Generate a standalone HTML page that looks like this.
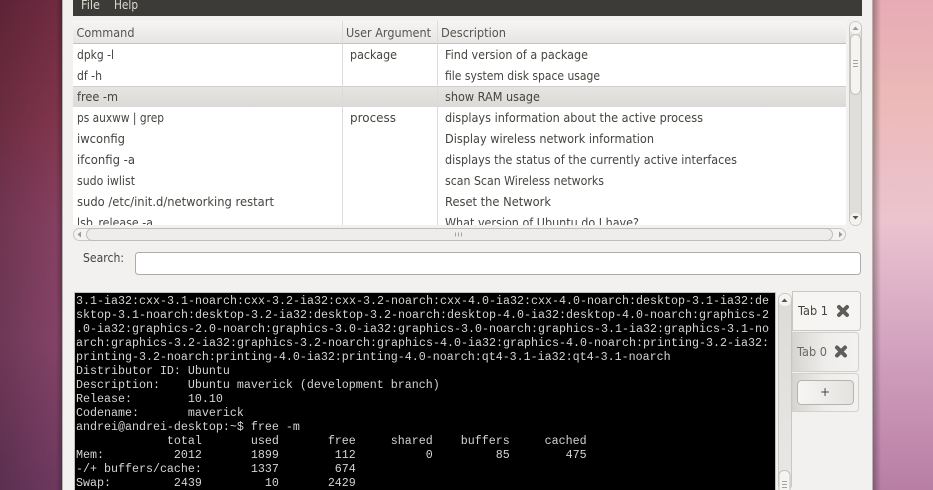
<!DOCTYPE html>
<html><head><meta charset="utf-8"><style>
html,body{margin:0;padding:0;width:933px;height:490px;overflow:hidden;background:#f2f1ef}
svg{position:absolute;left:0;top:0}
.t{font-family:"DejaVu Sans","Liberation Sans",sans-serif;font-size:12px;fill:#45443f}
.h{font-family:"DejaVu Sans","Liberation Sans",sans-serif;font-size:12px;fill:#55544f}
.m{font-family:"Liberation Mono",monospace;font-size:11.67px;fill:#d4d4d4}
</style></head><body>
<svg width="933" height="490" viewBox="0 0 933 490" xmlns="http://www.w3.org/2000/svg">
<defs>
<linearGradient id="bl" x1="0" y1="0" x2="0" y2="1"><stop offset="0" stop-color="#6e2a40"/><stop offset=".25" stop-color="#80354c"/><stop offset=".45" stop-color="#843f60"/><stop offset=".7" stop-color="#824266"/><stop offset="1" stop-color="#6c385e"/></linearGradient>
<linearGradient id="br" x1="0" y1="0" x2="0" y2="1"><stop offset="0" stop-color="#e7abb5"/><stop offset=".2" stop-color="#ecb9b8"/><stop offset=".45" stop-color="#ebc4cf"/><stop offset=".7" stop-color="#d3a3c0"/><stop offset="1" stop-color="#b87ea4"/></linearGradient>
<linearGradient id="hd" x1="0" y1="0" x2="0" y2="1"><stop offset="0" stop-color="#f6f5f4"/><stop offset="1" stop-color="#e6e5e3"/></linearGradient>
<linearGradient id="sel" x1="0" y1="0" x2="0" y2="1"><stop offset="0" stop-color="#e6e5e3"/><stop offset="1" stop-color="#dbdad7"/></linearGradient>
<linearGradient id="th" x1="0" y1="0" x2="1" y2="0"><stop offset="0" stop-color="#f7f6f5"/><stop offset="1" stop-color="#e3e2df"/></linearGradient>
<linearGradient id="tv" x1="0" y1="0" x2="0" y2="1"><stop offset="0" stop-color="#dcdbd8"/><stop offset="1" stop-color="#e9e8e6"/></linearGradient>
<linearGradient id="tab" x1="0" y1="0" x2="1" y2="0"><stop offset="0" stop-color="#d6d5d1"/><stop offset=".5" stop-color="#eeedeb"/><stop offset="1" stop-color="#f3f2f0"/></linearGradient>
<linearGradient id="dk" x1="0" y1="0" x2="1" y2="0"><stop offset="0" stop-color="#000" stop-opacity=".16"/><stop offset="1" stop-color="#000" stop-opacity="0"/></linearGradient>
<linearGradient id="shl" x1="0" y1="0" x2="1" y2="0"><stop offset="0" stop-color="#000" stop-opacity="0"/><stop offset="1" stop-color="#000" stop-opacity=".22"/></linearGradient>
<linearGradient id="shr" x1="0" y1="0" x2="1" y2="0"><stop offset="0" stop-color="#000" stop-opacity=".3"/><stop offset="1" stop-color="#000" stop-opacity="0"/></linearGradient>
</defs>
<!-- desktop -->
<rect x="0" y="0" width="62" height="490" fill="url(#bl)"/>
<rect x="0" y="0" width="55" height="490" fill="url(#dk)"/>
<rect x="873" y="0" width="60" height="490" fill="url(#br)"/>
<rect x="56" y="0" width="6" height="490" fill="url(#shl)"/>
<rect x="873" y="0" width="8" height="490" fill="url(#shr)"/>
<!-- window -->
<rect x="62" y="0" width="811" height="490" fill="#f2f1ef"/>
<rect x="62" y="0" width="1" height="490" fill="#b5b3ad"/>
<rect x="872" y="0" width="1" height="490" fill="#b5b3ad"/>
<!-- menu -->
<rect x="73" y="0" width="789" height="16" fill="#3c3b37"/>
<text x="81" y="9" class="t" style="fill:#dfdbd2" textLength="19" lengthAdjust="spacingAndGlyphs">File</text>
<text x="114" y="9" class="t" style="fill:#dfdbd2" textLength="24" lengthAdjust="spacingAndGlyphs">Help</text>
<!-- list -->
<rect x="73" y="21" width="773" height="204" fill="#fff"/>
<rect x="73" y="21" width="773" height="22" fill="url(#hd)"/>
<rect x="73" y="43" width="773" height="1" fill="#c4c2bd"/>
<rect x="73" y="86" width="773" height="21" fill="url(#sel)"/>
<rect x="73" y="86" width="773" height="1" fill="#d0cfcb"/>
<rect x="342" y="21" width="1" height="204" fill="#dcdbd8"/>
<rect x="437" y="21" width="1" height="204" fill="#dcdbd8"/>
<text x="76.500" y="37" class="h" textLength="58" lengthAdjust="spacingAndGlyphs">Command</text>
<text x="346" y="37" class="h" textLength="85" lengthAdjust="spacingAndGlyphs">User Argument</text>
<text x="441" y="37" class="h" textLength="65" lengthAdjust="spacingAndGlyphs">Description</text>
<text x="77" y="59" class="t" textLength="37" lengthAdjust="spacingAndGlyphs">dpkg -l</text>
<text x="77" y="80" class="t" textLength="25" lengthAdjust="spacingAndGlyphs">df -h</text>
<text x="77" y="101" class="t" textLength="41" lengthAdjust="spacingAndGlyphs">free -m</text>
<text x="77" y="122" class="t" textLength="87" lengthAdjust="spacingAndGlyphs">ps auxww | grep</text>
<text x="77" y="143" class="t" textLength="48" lengthAdjust="spacingAndGlyphs">iwconfig</text>
<text x="77" y="164" class="t" textLength="58" lengthAdjust="spacingAndGlyphs">ifconfig -a</text>
<text x="77" y="185" class="t" textLength="58" lengthAdjust="spacingAndGlyphs">sudo iwlist</text>
<text x="77" y="206" class="t" textLength="197" lengthAdjust="spacingAndGlyphs">sudo /etc/init.d/networking restart</text>
<text x="350" y="59" class="t" textLength="47" lengthAdjust="spacingAndGlyphs">package</text>
<text x="350" y="122" class="t" textLength="46" lengthAdjust="spacingAndGlyphs">process</text>
<text x="445" y="59" class="t" textLength="143" lengthAdjust="spacingAndGlyphs">Find version of a package</text>
<text x="445" y="80" class="t" textLength="155" lengthAdjust="spacingAndGlyphs">file system disk space usage</text>
<text x="445" y="101" class="t" textLength="95" lengthAdjust="spacingAndGlyphs">show RAM usage</text>
<text x="445" y="122" class="t" textLength="258" lengthAdjust="spacingAndGlyphs">displays information about the active process</text>
<text x="445" y="143" class="t" textLength="209" lengthAdjust="spacingAndGlyphs">Display wireless network information</text>
<text x="445" y="164" class="t" textLength="292" lengthAdjust="spacingAndGlyphs">displays the status of the currently active interfaces</text>
<text x="445" y="185" class="t" textLength="159" lengthAdjust="spacingAndGlyphs">scan Scan Wireless networks</text>
<text x="445" y="206" class="t" textLength="106" lengthAdjust="spacingAndGlyphs">Reset the Network</text>
<svg x="73" y="215" width="773" height="10" viewBox="73 215 773 10">
<text x="77" y="227" class="t" textLength="76" lengthAdjust="spacingAndGlyphs">lsb_release -a</text>
<text x="445" y="227" class="t" textLength="194" lengthAdjust="spacingAndGlyphs">What version of Ubuntu do I have?</text>
</svg>
<!-- vertical list scrollbar -->
<rect x="849.500" y="21.500" width="12" height="204" rx="6" fill="#dfdedb" stroke="#c9c7c2"/>
<rect x="850" y="22" width="11" height="12" rx="5" fill="#f4f3f2"/>
<path d="M852.500 30h6l-3-3.500z" fill="#9a9892"/>
<rect x="850" y="213" width="11" height="12" rx="5" fill="#f4f3f2"/>
<path d="M852.500 216h6l-3 3.500z" fill="#55534e"/>
<rect x="850.500" y="34.500" width="10" height="60" rx="5" fill="#f5f4f3" stroke="#c4c2bd"/>
<path d="M853 60.500h5M853 63.500h5M853 66.500h5" stroke="#a5a39e"/>
<!-- horizontal list scrollbar -->
<rect x="73.500" y="228.500" width="772" height="12" rx="6" fill="#f4f3f2" stroke="#c9c7c2"/>
<path d="M81 231.500v6l-3.500-3z" fill="#9a9892"/>
<path d="M839 231.500v6l3.500-3z" fill="#9a9892"/>
<rect x="86.500" y="228.500" width="746" height="12" rx="6" fill="#eeedeb" stroke="#bfbdb8"/>
<path d="M455.500 232.500v4M458.500 232.500v4M461.500 232.500v4" stroke="#a5a39e"/>
<!-- search -->
<text x="83" y="262" class="t" textLength="41" lengthAdjust="spacingAndGlyphs">Search:</text>
<rect x="135.500" y="252.500" width="725" height="22" rx="3" fill="#fff" stroke="#aeaca6"/>
<!-- terminal -->
<rect x="74" y="292" width="702" height="198" fill="#000"/>
<rect x="74.500" y="292.500" width="701" height="198" fill="none" stroke="#c2c0bb"/>
<text x="76" y="304" class="m" textLength="693">3.1-ia32:cxx-3.1-noarch:cxx-3.2-ia32:cxx-3.2-noarch:cxx-4.0-ia32:cxx-4.0-noarch:desktop-3.1-ia32:de</text>
<text x="76" y="318" class="m" textLength="693">sktop-3.1-noarch:desktop-3.2-ia32:desktop-3.2-noarch:desktop-4.0-ia32:desktop-4.0-noarch:graphics-2</text>
<text x="76" y="332" class="m" textLength="693">.0-ia32:graphics-2.0-noarch:graphics-3.0-ia32:graphics-3.0-noarch:graphics-3.1-ia32:graphics-3.1-no</text>
<text x="76" y="346" class="m" textLength="693">arch:graphics-3.2-ia32:graphics-3.2-noarch:graphics-4.0-ia32:graphics-4.0-noarch:printing-3.2-ia32:</text>
<text x="76" y="360" class="m">printing-3.2-noarch:printing-4.0-ia32:printing-4.0-noarch:qt4-3.1-ia32:qt4-3.1-noarch</text>
<text x="76" y="374" class="m" xml:space="preserve">Distributor ID: Ubuntu</text>
<text x="76" y="388" class="m" xml:space="preserve">Description:    Ubuntu maverick (development branch)</text>
<text x="76" y="402" class="m" xml:space="preserve">Release:        10.10</text>
<text x="76" y="416" class="m" xml:space="preserve">Codename:       maverick</text>
<text x="76" y="430" class="m" xml:space="preserve">andrei@andrei-desktop:~$ free -m</text>
<text x="76" y="444" class="m" xml:space="preserve">             total       used       free     shared    buffers     cached</text>
<text x="76" y="458" class="m" xml:space="preserve">Mem:          2012       1899        112          0         85        475</text>
<text x="76" y="472" class="m" xml:space="preserve">-/+ buffers/cache:       1337        674</text>
<text x="76" y="486" class="m" xml:space="preserve">Swap:         2439         10       2429</text>
<!-- terminal scrollbar -->
<rect x="778.500" y="293.500" width="13" height="197" rx="6" fill="url(#tv)" stroke="#c9c7c2"/>
<rect x="779" y="294" width="12" height="12" rx="5" fill="#f4f3f2"/>
<path d="M781.500 302h6l-3-3.500z" fill="#55534e"/>
<rect x="779" y="470.500" width="11" height="24" rx="5" fill="#f5f4f3" stroke="#c4c2bd"/>
<path d="M782 481.500h5M782 484.500h5M782 487.500h5" stroke="#a5a39e"/>
<!-- tabs -->
<path d="M792.500 291.500h65a3 3 0 0 1 3 3v33a3 3 0 0 1-3 3h-65z" fill="#f6f5f4" stroke="#c9c7c2"/>
<path d="M792.500 332.500h63a3 3 0 0 1 3 3v33a3 3 0 0 1-3 3h-63z" fill="url(#tab)" stroke="#d3d1cd"/>
<path d="M792.500 373.500h63a3 3 0 0 1 3 3v32a3 3 0 0 1-3 3h-63z" fill="url(#tab)" stroke="#d3d1cd"/>
<text x="798" y="315" class="t" textLength="30" lengthAdjust="spacingAndGlyphs">Tab 1</text>
<text x="797" y="356" class="t" style="fill:#6a6964" textLength="30" lengthAdjust="spacingAndGlyphs">Tab 0</text>
<path d="M839 307l8 8M847 307l-8 8" stroke="#5e5d59" stroke-width="4" stroke-linecap="round"/>
<path d="M837 347.500l8 8M845 347.500l-8 8" stroke="#5e5d59" stroke-width="4" stroke-linecap="round"/>
<rect x="797.500" y="380.500" width="56" height="24" rx="4" fill="url(#th)" stroke="#b5b3ad"/>
<text x="825" y="396" class="t" text-anchor="middle">+</text>
</svg>
</body></html>
